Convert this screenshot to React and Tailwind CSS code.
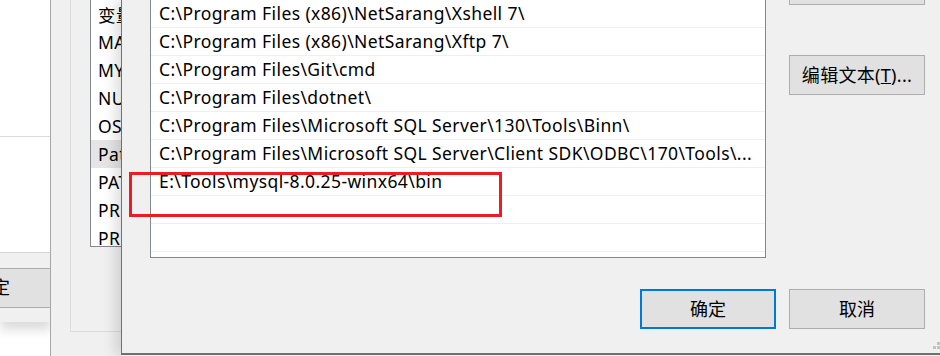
import React from 'react';

const FONT = { fontFamily: '"Noto Sans", "Noto Sans CJK SC", sans-serif' };

const paths = [
  'C:\\Program Files (x86)\\NetSarang\\Xshell 7\\',
  'C:\\Program Files (x86)\\NetSarang\\Xftp 7\\',
  'C:\\Program Files\\Git\\cmd',
  'C:\\Program Files\\dotnet\\',
  'C:\\Program Files\\Microsoft SQL Server\\130\\Tools\\Binn\\',
  'C:\\Program Files\\Microsoft SQL Server\\Client SDK\\ODBC\\170\\Tools\\...',
  'E:\\Tools\\mysql-8.0.25-winx64\\bin',
  '',
  '',
];

const vars = ['变量', 'MAVEN_HOME', 'MYSQL_HOME', 'NUMBER_OF_PROCESSORS', 'OS', 'Path', 'PATHEXT', 'PROCESSOR_ARCHITECTURE', 'PROCESSOR_IDENTIFIER'];

const Button = ({ children, primary, className = '' }) => (
  <div
    className={`flex h-[40px] w-[136px] items-center justify-center bg-[#e1e1e1] text-[18px] text-black ${
      primary ? 'border-2 border-[#0078d7]' : 'border border-[#adadad]'
    } ${className}`}
  >
    {children}
  </div>
);

export default function App() {
  return (
    <div className="relative h-[356px] w-[940px] overflow-hidden bg-white" style={FONT}>
      {/* back window */}
      <div className="absolute left-0 top-0 flex h-[322px] w-[51px] flex-col overflow-hidden shadow-[0_8px_10px_rgba(0,0,0,0.14)]">
        <div className="h-[137px] shrink-0 border-b border-[#dcdcdc] bg-white" />
        <div className="h-[116px] shrink-0 border-b border-[#d4d4d4] bg-white" />
        <div className="flex flex-1 items-center bg-[#f0f0f0]">
          <div className="ml-[-76px] flex h-[40px] w-[136px] shrink-0 items-center justify-center border border-[#adadad] bg-[#e1e1e1] text-[18px]">
            确定
          </div>
        </div>
      </div>

      {/* middle window, mostly hidden behind the front dialog */}
      <div className="absolute left-[50px] top-0 h-[356px] w-[72px] overflow-hidden border-l border-[#a6a6a6] bg-[#f0f0f0]">
        <div className="ml-[19px] h-[332px] w-[200px] border-b border-l border-[#dcdcdc] pl-[19px]">
          <div className="h-[247px] border-b border-l border-[#828790] bg-white">
            {vars.map((v, i) => (
              <div
                key={i}
                className={`flex h-[28px] items-center whitespace-nowrap pl-[7px] text-[17.5px] tracking-[0.4px] text-black ${
                  i === 0 ? 'pt-[2px]' : ''
                } ${v === 'Path' ? 'bg-[#e5e5e5]' : ''}`}
              >
                {v}
              </div>
            ))}
          </div>
        </div>
      </div>

      {/* front dialog */}
      <div className="absolute left-[121px] top-0 flex h-[355px] w-[830px] flex-col border-b-2 border-l border-[#707070] bg-[#f0f0f0] shadow-[-6px_0_12px_rgba(0,0,0,0.13)]">
        <div className="flex pl-[28px]">
          <div className="h-[258px] w-[616px] border-b border-l border-r border-[#828790] bg-white">
            {paths.map((p, i) => (
              <div
                key={i}
                className="flex h-[28px] items-center whitespace-nowrap border-b border-[#efefef] pl-2 text-[17.5px] tracking-[0.4px] text-black"
              >
                {p}
              </div>
            ))}
          </div>
          <div className="ml-[23px] flex flex-col">
            <div className="mt-[-36px] flex h-[41px] w-[136px] border border-[#adadad] bg-[#e1e1e1]" />
            <Button className="mt-[50px]">
              <span className="tracking-[0.3px]">
                编辑文本(<span className="underline">T</span>)...
              </span>
            </Button>
          </div>
        </div>
        <div className="mt-[31px] flex gap-[13px] pl-[518px]">
          <Button primary>确定</Button>
          <Button>取消</Button>
        </div>
        <svg className="absolute bottom-[3px] left-[810px]" width="8" height="8" viewBox="0 0 8 8">
          <rect x="5" y="0" width="3" height="3" fill="#c2c2c2" />
          <rect x="1" y="4" width="3" height="3" fill="#c2c2c2" />
          <rect x="5" y="4" width="3" height="3" fill="#c2c2c2" />
        </svg>
      </div>

      {/* annotation */}
      <div className="absolute left-[129px] top-[172px] h-[45px] w-[373px] border-[3px] border-[#ec1c24]" />
    </div>
  );
}
